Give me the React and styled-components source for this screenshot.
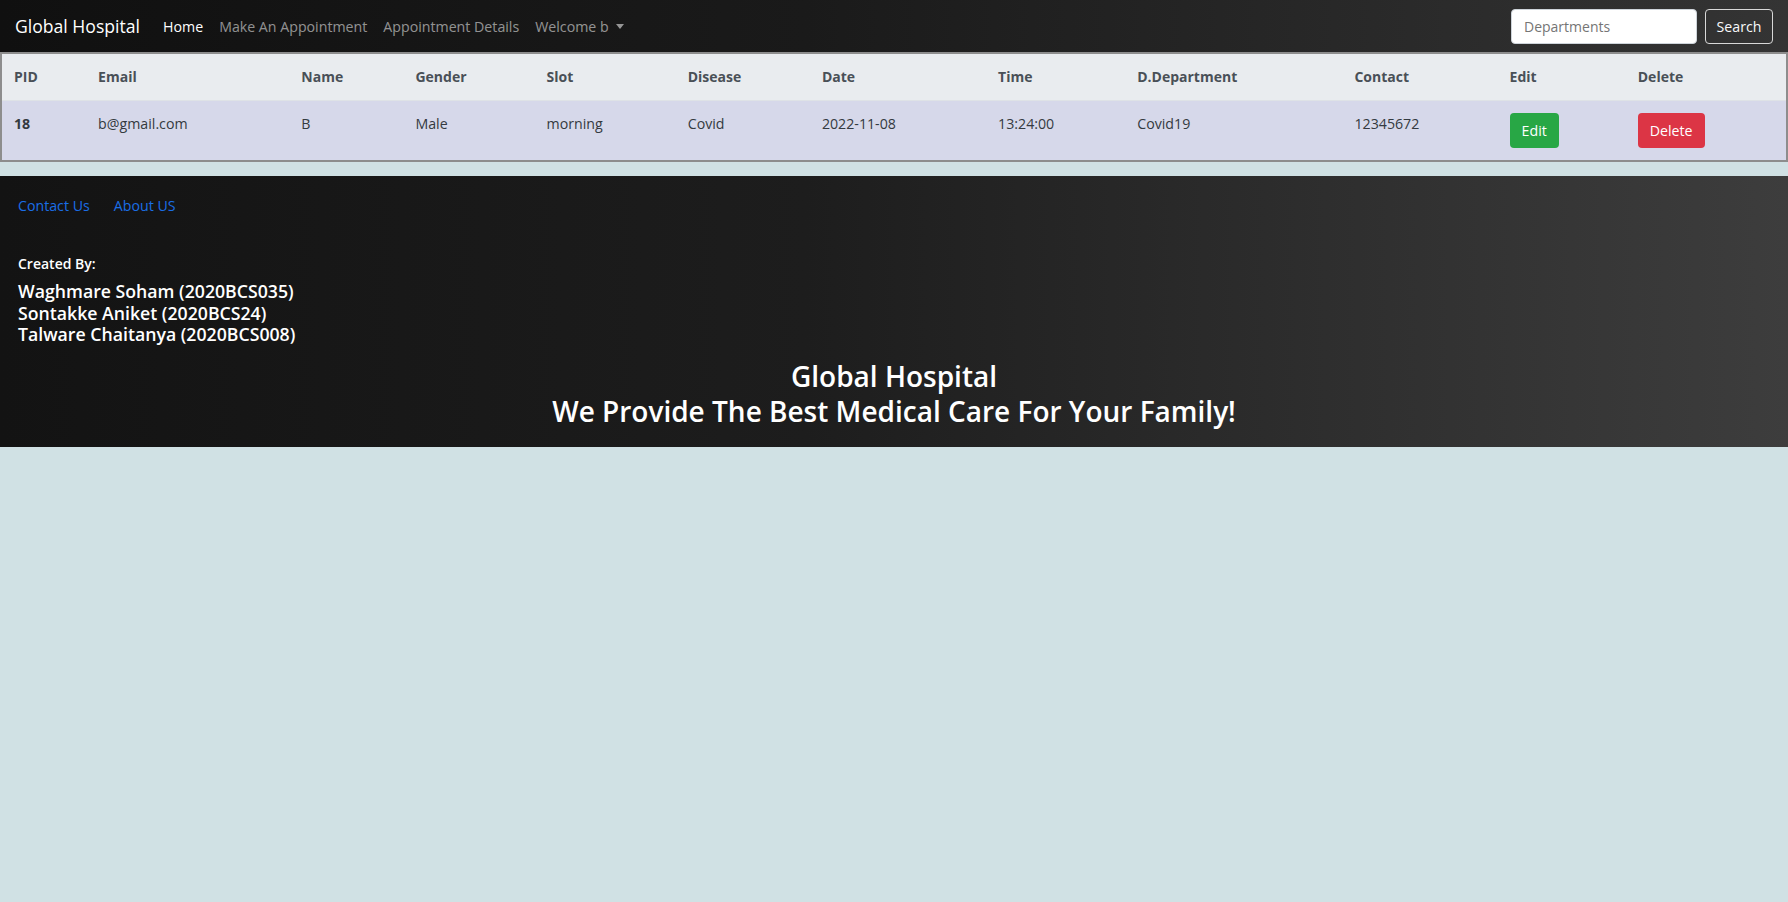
import React from 'react';
import styled, { createGlobalStyle } from 'styled-components';

const GlobalStyle = createGlobalStyle`
  body {
    margin: 0;
    background-color: #d0e1e4;
    font-family: "Open Sans", "Noto Sans", sans-serif;
    font-size: 14.2px;
    color: #212529;
  }
  * {
    box-sizing: border-box;
  }
`;

const columns = [
  { key: 'pid', label: 'PID', width: 85 },
  { key: 'email', label: 'Email', width: 203 },
  { key: 'name', label: 'Name', width: 114 },
  { key: 'gender', label: 'Gender', width: 131 },
  { key: 'slot', label: 'Slot', width: 141 },
  { key: 'disease', label: 'Disease', width: 134 },
  { key: 'date', label: 'Date', width: 176 },
  { key: 'time', label: 'Time', width: 139 },
  { key: 'dept', label: 'D.Department', width: 217 },
  { key: 'contact', label: 'Contact', width: 155 },
  { key: 'edit', label: 'Edit', width: 128 },
  { key: 'delete', label: 'Delete', width: 161 },
];

const appointment = {
  pid: 18,
  email: 'b@gmail.com',
  name: 'B',
  gender: 'Male',
  slot: 'morning',
  disease: 'Covid',
  date: '2022-11-08',
  time: '13:24:00',
  dept: 'Covid19',
  contact: '12345672',
};

const authors = [
  'Waghmare Soham (2020BCS035)',
  'Sontakke Aniket (2020BCS24)',
  'Talware Chaitanya (2020BCS008)',
];

const App = () => {
  return (
    <>
      <GlobalStyle />
      <Navbar>
        <Brand>Global Hospital</Brand>
        <NavLinks>
          <NavLink active>Home</NavLink>
          <NavLink>Make An Appointment</NavLink>
          <NavLink>Appointment Details</NavLink>
          <NavLink>
            Welcome b <Caret />
          </NavLink>
        </NavLinks>
        <SearchForm onSubmit={e => e.preventDefault()}>
          <SearchInput type="text" placeholder="Departments" />
          <SearchButton type="submit">Search</SearchButton>
        </SearchForm>
      </Navbar>

      <Table>
        <colgroup>
          {columns.map(c => (
            <col key={c.key} style={{ width: c.width }} />
          ))}
        </colgroup>
        <thead>
          <tr>
            {columns.map(c => (
              <Th key={c.key}>{c.label}</Th>
            ))}
          </tr>
        </thead>
        <tbody>
          <tr>
            <Td bold>{appointment.pid}</Td>
            <Td>{appointment.email}</Td>
            <Td>{appointment.name}</Td>
            <Td>{appointment.gender}</Td>
            <Td>{appointment.slot}</Td>
            <Td>{appointment.disease}</Td>
            <Td>{appointment.date}</Td>
            <Td>{appointment.time}</Td>
            <Td>{appointment.dept}</Td>
            <Td>{appointment.contact}</Td>
            <Td>
              <ActionButton variant="success">Edit</ActionButton>
            </Td>
            <Td>
              <ActionButton variant="danger">Delete</ActionButton>
            </Td>
          </tr>
        </tbody>
      </Table>

      <Footer>
        <FooterLinks>
          <FooterLink href="#">Contact Us</FooterLink>
          <FooterLink href="#">About US</FooterLink>
        </FooterLinks>
        <CreatedBy>Created By:</CreatedBy>
        <Authors>
          {authors.map(a => (
            <div key={a}>{a}</div>
          ))}
        </Authors>
        <Tagline>
          Global Hospital
          <br />
          We Provide The Best Medical Care For Your Family!
        </Tagline>
      </Footer>
    </>
  );
};

const Navbar = styled.nav`
  display: flex;
  align-items: center;
  height: 52px;
  padding: 0 15px;
  background: linear-gradient(to right, #101010 0%, #1a1a1a 45%, #343434 100%);
`;

const Brand = styled.a`
  margin-right: 15px;
  color: #ffffff;
  font-size: 17.6px;
  white-space: nowrap;
`;

const NavLinks = styled.div`
  display: flex;
  align-items: center;
  flex: 1;
`;

const NavLink = styled.a`
  display: flex;
  align-items: center;
  padding: 8px;
  color: ${({ active }) => (active ? '#ffffff' : 'rgba(255, 255, 255, 0.55)')};
  font-size: 14.2px;
  cursor: pointer;
`;

const Caret = styled.span`
  display: inline-block;
  margin-left: 7px;
  border-top: 5px solid rgba(255, 255, 255, 0.55);
  border-right: 4px solid transparent;
  border-left: 4px solid transparent;
`;

const SearchForm = styled.form`
  display: flex;
  align-items: center;
  gap: 8px;
`;

const SearchInput = styled.input`
  width: 186px;
  height: 35px;
  padding: 0 12px;
  border: 1px solid #ced4da;
  border-radius: 4px;
  background: #ffffff;
  font-family: inherit;
  font-size: 14px;

  ::placeholder {
    color: #6c757d;
  }
`;

const SearchButton = styled.button`
  width: 68px;
  height: 35px;
  border: 1px solid #d8d8d8;
  border-radius: 4px;
  background: transparent;
  color: #f8f9fa;
  font-family: inherit;
  font-size: 14.2px;
  cursor: pointer;
`;

const Table = styled.table`
  width: 100%;
  table-layout: fixed;
  border-collapse: collapse;
  border: 2px solid #8d8d8d;
`;

const Th = styled.th`
  height: 46px;
  padding: 12px;
  background: #e9ecef;
  border-bottom: 1px solid #dee2e6;
  color: #495057;
  font-size: 14px;
  font-weight: 700;
  line-height: 22px;
  text-align: left;
  vertical-align: top;
`;

const Td = styled.td`
  height: 57px;
  padding: 12px;
  background: #d6d8ea;
  color: #343a40;
  font-weight: ${({ bold }) => (bold ? 700 : 400)};
  line-height: 22px;
  vertical-align: top;
`;

const ActionButton = styled.button`
  height: 35px;
  padding: 0 12px;
  border: none;
  border-radius: 4px;
  background: ${({ variant }) => (variant === 'danger' ? '#dc3545' : '#28a745')};
  color: #ffffff;
  font-family: inherit;
  font-size: 14.2px;
  cursor: pointer;
`;

const Footer = styled.footer`
  display: flex;
  flex-direction: column;
  margin-top: 14px;
  height: 271px;
  padding: 20px 18px 0;
  background: linear-gradient(to right, #131313 0%, #1d1d1d 45%, #3d3d3d 100%);
  color: #ffffff;
`;

const FooterLinks = styled.div`
  display: flex;
  gap: 24px;
`;

const FooterLink = styled.a`
  color: #1a6ee6;
  font-size: 14.2px;
  text-decoration: none;
`;

const CreatedBy = styled.div`
  margin-top: 38px;
  font-size: 14px;
  font-weight: 600;
  line-height: 21px;
`;

const Authors = styled.div`
  margin-top: 7px;
  font-size: 17.7px;
  font-weight: 600;
  line-height: 21.5px;
`;

const Tagline = styled.h3`
  margin: 13px 0 0;
  font-size: 28px;
  font-weight: 600;
  line-height: 35px;
  text-align: center;
`;

export default App;
